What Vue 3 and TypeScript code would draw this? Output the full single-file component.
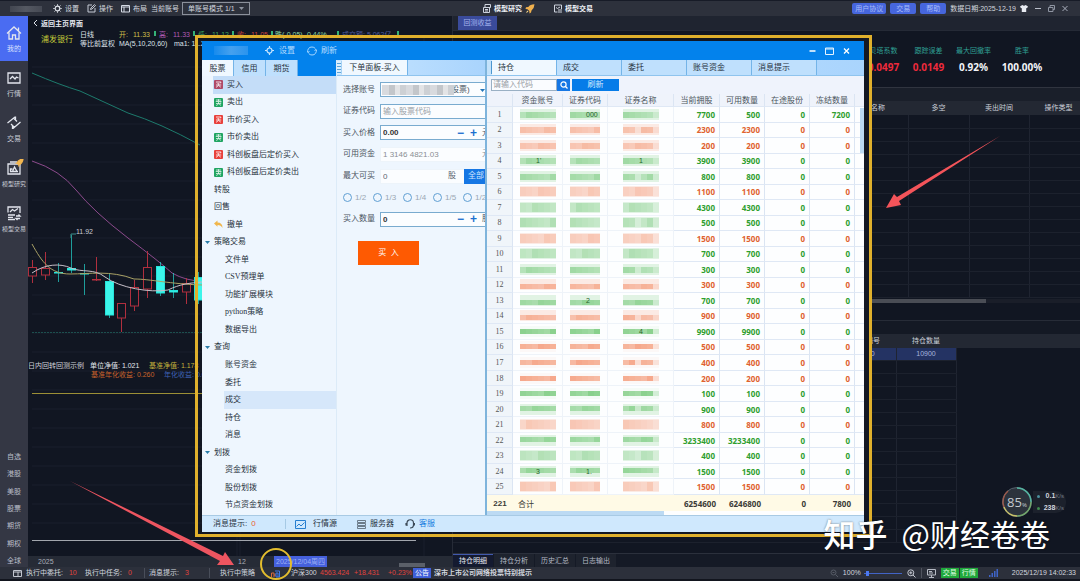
<script setup lang="ts">
interface NavItem { text: string; kind: 'buy' | 'sell' | 'plain' | 'undo' | 'group' | 'child'; active?: boolean; hover?: boolean }
interface Holding { total: number; usable: number; frozen: number; up: boolean; mask: string }
interface Candle { x: number; top: number; bottom: number; high: number; low: number; up: boolean }

const sideItems = ['我的', '行情', '交易', '模型研究', '模型交易']
const sideLinks = ['自选', '港股', '美股', '股票', '期货', '期权', '全球']

const nav: NavItem[] = [
  { text: '买入', kind: 'buy', active: true },
  { text: '卖出', kind: 'sell' },
  { text: '市价买入', kind: 'buy' },
  { text: '市价卖出', kind: 'sell' },
  { text: '科创板盘后定价买入', kind: 'buy' },
  { text: '科创板盘后定价卖出', kind: 'sell' },
  { text: '转股', kind: 'plain' },
  { text: '回售', kind: 'plain' },
  { text: '撤单', kind: 'undo' },
  { text: '策略交易', kind: 'group' },
  { text: '文件单', kind: 'child' },
  { text: 'CSV预埋单', kind: 'child' },
  { text: '功能扩展模块', kind: 'child' },
  { text: 'python策略', kind: 'child' },
  { text: '数据导出', kind: 'child' },
  { text: '查询', kind: 'group' },
  { text: '账号资金', kind: 'child' },
  { text: '委托', kind: 'child' },
  { text: '成交', kind: 'child', hover: true },
  { text: '持仓', kind: 'child' },
  { text: '消息', kind: 'child' },
  { text: '划拨', kind: 'group' },
  { text: '资金划拨', kind: 'child' },
  { text: '股份划拨', kind: 'child' },
  { text: '节点资金划拨', kind: 'child' },
]

const tableTabs = ['持仓', '成交', '委托', '账号资金', '消息提示']
const columns = ['资金账号', '证券代码', '证券名称', '当前拥股', '可用数量', '在途股份', '冻结数量']

const h = (total: number, up: boolean, mask: string, usable = total, frozen = 0): Holding => ({ total, usable, frozen, up, mask })
const holdings: Holding[] = [
  h(7700, false, 'm', 500, 7200), h(2300, true, 'm'), h(200, true, 'm'), h(3900, false, 'm'), h(800, false, 'm'),
  h(1100, true, 'u'), h(4300, false, 'u'), h(500, false, 'u'), h(1500, true, 'u'), h(700, false, 'u'),
  h(300, false, 'm'), h(300, true, 'b'), h(700, false, 'b'), h(900, true, 'b'), h(9900, false, 'n'),
  h(500, true, 'n'), h(400, true, 'n'), h(200, true, 'n'), h(100, false, 'n'), h(900, false, 't'),
  h(800, true, 'u'), h(3233400, false, 't'), h(400, false, 'u'), h(1500, false, 't'), h(1500, true, 'u'),
]

// Mosaic tiles hide account numbers, codes and names
const bands: Record<string, [number, number, number]> = {
  m: [3, 6, 0.5], u: [1, 9, 0.35], b: [5, 5, 0.62], n: [3, 5, 0.75], t: [2, 5, 0.6],
}
function tiles(row: number, col: number) {
  const [y, height, base] = bands[holdings[row].mask]
  const width = [36, 30, 36][col]
  const out: { x: number; y: number; w: number; h: number; o: number }[] = []
  for (let x = 0, k = 0; x < width; x += 6, k++) {
    const n = ((row * 7 + k * 13 + col * 29 + k * k * 5) % 10) / 10
    const edge = col === 2 && (k === 5 || (k === 2 && row % 3 === 1)) ? 0.35 : 1
    out.push({ x, y, w: 6, h: height, o: (base - 0.1 + n * 0.22) * edge })
  }
  return out
}
const remnants: Record<string, string> = { '0-1': '000', '3-0': "1'", '3-2': '1', '12-1': '2', '14-2': '4', '23-0': '3', '23-1': '1.' }

const candles: Candle[] = [
  { x: 32, top: 267, bottom: 276, high: 260, low: 283, up: true },
  { x: 45, top: 268, bottom: 275, high: 252, low: 280, up: true },
  { x: 58, top: 272, bottom: 273, high: 263, low: 282, up: false },
  { x: 71, top: 268, bottom: 270, high: 235, low: 273, up: false },
  { x: 84, top: 273, bottom: 274, high: 264, low: 295, up: false },
  { x: 96, top: 279, bottom: 280, high: 257, low: 281, up: true },
  { x: 109, top: 281, bottom: 315, high: 273, low: 318, up: false },
  { x: 121, top: 303, bottom: 318, high: 303, low: 332, up: true },
  { x: 134, top: 287, bottom: 306, high: 280, low: 311, up: true },
  { x: 147, top: 267, bottom: 289, high: 251, low: 298, up: true },
  { x: 160, top: 266, bottom: 293, high: 262, low: 296, up: false },
  { x: 173, top: 290, bottom: 292, high: 273, low: 298, up: false },
  { x: 186, top: 283, bottom: 292, high: 278, low: 304, up: true },
  { x: 198, top: 277, bottom: 300, high: 272, low: 304, up: false },
]
const fractions = ['1/2', '1/3', '1/4', '1/5', '1/2']
const stats = [
  { name: '贝塔系数', value: '0.0497', red: true },
  { name: '跟踪误差', value: '0.0149', red: true },
  { name: '最大回撤率', value: '0.92%', red: false },
  { name: '胜率', value: '100.00%', red: false },
]
</script>

<template>
  <div class="desk">
    <header class="top">
      <div class="top-left">
        <span class="smudge"></span>
        <button class="tool">
          <svg width="9" height="9" viewBox="0 0 9 9"><circle cx="4.500" cy="4.500" r="2.300" fill="none" stroke="#dfe3ea" stroke-width="1.200" /><path d="M4.500 .3v1.400M4.500 7.300v1.400M.3 4.500h1.400M7.300 4.500h1.400M1.500 1.500l1 1M6.500 6.500l1 1M7.500 1.500l-1 1M2.500 6.500l-1 1" stroke="#dfe3ea" /></svg>设置
        </button>
        <button class="tool">
          <svg width="9" height="9" viewBox="0 0 9 9" fill="none" stroke="#c5cad4"><path d="M5 1H1v7h7V4M3.500 5.500l.4-1.500L7.500.6l1 1L5 5z" /></svg>操作
        </button>
        <button class="tool">
          <svg width="9" height="9" viewBox="0 0 9 9" fill="none" stroke="#d5dae4"><path d="M.5 1.500h8v6.500h-8zM.5 3h8M3 3v5" /></svg>布局
        </button>
        <label class="mode">当前账号
          <span class="mode-box">
            <select><option>单账号模式 1/1</option></select>
            <svg width="5" height="3" viewBox="0 0 5 3"><path d="M0 0h5L2.500 3z" fill="#8d939f" /></svg>
          </span>
        </label>
      </div>
      <div class="top-mid">
        <a href="#"><svg width="8" height="9" viewBox="0 0 8 9" fill="none" stroke="#cfd4de"><path d="M2 .5h5.500v3H2zM.5 3.500h6v5h-6zM2 5.500h3M2 7h3" /></svg>模型研究
          <svg width="10" height="10" viewBox="0 0 10 10"><path d="M9.500.3Q5 .5 3.300 3L1 3.300.5 5l2 .2 1.800 1.900L4.500 9.500 6 8.500l.5-2Q9.300 4.500 9.500.3z" fill="#f0b04e" /><path d="M2.200 6.500 1 9l2.500-1.200z" fill="#f8d78c" /></svg>
        </a>
        <a href="#"><svg width="8" height="9" viewBox="0 0 8 9" fill="none" stroke="#cfd4de"><path d="M.5 1h7v4M.5 1v7h3M2 3.500l1.500 1L6 3M4 6h4M4 8h4" /></svg>模型交易</a>
      </div>
      <div class="top-right">
        <button class="pill">用户协议</button><button class="pill">交易</button><button class="pill">帮助</button>
        <span>数据日期:2025-12-19</span>
        <svg width="8" height="7" viewBox="0 0 8 7"><path d="M2.300 0Q4 1.300 5.700 0L8 1.500 7 3.300l-.8-.4V7H1.800V2.900l-.8.4L0 1.500z" fill="#e8ebf2" /></svg>
        <button class="win-btn" aria-label="最小化"><svg width="6" height="7" viewBox="0 0 6 7"><path d="M0 3.500h6" stroke="#b9bec9" /></svg></button>
        <button class="win-btn" aria-label="还原"><svg width="7" height="7" viewBox="0 0 7 7" fill="none" stroke="#8f95a2"><path d="M.5 2.500h4.500v4H.5zM2 2.500v-2h4.500v4H5" /></svg></button>
        <button class="win-btn" aria-label="关闭"><svg width="6" height="7" viewBox="0 0 6 7"><path d="M.5 1l5 5M5.500 1l-5 5" stroke="#a9aebb" /></svg></button>
      </div>
    </header>

    <div class="body">
      <nav class="side">
        <a v-for="(s, i) in sideItems" :key="s" href="#" class="side-item" :class="{ on: i === 0, small: i > 2 }">
          <svg width="20" height="18" viewBox="0 0 20 18" fill="none" stroke="#e3e6ee" stroke-width="1.300">
            <template v-if="i === 0"><path d="M3 9.500 10 3l7 6.500M5 8.500V15h3.500v-4h3v4H15V8.500M14.500 6.500V3.500" /></template>
            <template v-else-if="i === 1"><path d="M4 4h12v10H4zM6 10l2.500-2.500L11 10l1.500-2 2 1" /></template>
            <template v-else-if="i === 2"><path d="M3.500 9 11 3M11.500 2.500v3.500M9.500 4l3.500 3.500M16.500 8 9 14.500M8.500 15v-3.500M10.500 13.500 7 10" /></template>
            <template v-else-if="i === 3">
              <path d="M4 5h12v10H4zM6 3h7M6.500 12.500V10h2M8.500 12.500l2-4.500 2.500 4.500M6 12.500h8" /><path d="M19 0Q14.500.5 13 4l1.800 1.800Q18.500 4.500 19 0zM13 4l-1.500.5M14.800 5.800V7.500" fill="#f3b64f" stroke="#f3b64f" />
            </template>
            <template v-else><path d="M4 8.500V3h12v6M6 8l2.500-2.500 2 1.500L14 4.500M4 11h7M4 13.300h5M4 15.500h7M12 12h4l-1.500-1.500M16 14.500h-4l1.500 1.500" /></template>
          </svg>
          <span>{{ s }}</span>
        </a>
        <div class="side-links"><a v-for="s in sideLinks" :key="s" href="#">{{ s }}</a></div>
      </nav>

      <section class="chart">
        <svg class="plot" width="424" height="551" viewBox="28 16 424 551">
          <g stroke="#1a1f2c">
            <path v-for="n in 25" :key="n" :d="`M32 ${48 + n * 19}H452`" />
            <path d="M240 400V556M424 38V556M237 537v19" />
          </g>
          <path d="M37 20l-3 3 3 3" fill="none" stroke="#dfe3ea" />
          <text x="41" y="26" class="b" fill="#e4e7ee">返回主页界面</text>
          <text x="41" y="42" class="big" fill="#c6cf3a">浦发银行</text>
          <text x="80" y="37" fill="#dfe3ea">日线</text>
          <text x="80" y="46" fill="#dfe3ea">等比前复权</text>
          <text x="119" y="37" fill="#cdbf4a">开: <tspan x="133">11.33</tspan></text>
          <text x="159" y="37" fill="#b05bb5">高: <tspan x="173">11.33</tspan></text>
          <text x="198" y="37" fill="#3fa55a">低: <tspan x="212">11.12</tspan></text>
          <text x="237" y="37" fill="#c9423c">收: <tspan x="251">11.05</tspan></text>
          <text x="275" y="37" fill="#8fd6a4">跌(-0.05) -0.44%</text>
          <text x="342" y="37" fill="#4d5a9c">成交额: 5.062亿</text>
          <path d="M155 31v5M194 31v5M233 31v5M272 31v5M338 31v5M398 31v5" stroke="#35b277" stroke-width="2" />
          <text x="119" y="46" fill="#dfe3ea">MA(5,10,20,60)</text>
          <text x="174" y="46" fill="#dfe3ea">ma1: 11.2</text>

          <path d="M32 73Q60 85 80 91L128 113Q160 123 200 145" fill="none" stroke="#1d7a6c" />
          <path d="M32 161Q60 170 76 190 94 212 128 238 160 262 172 273 186 281 202 281" fill="none" stroke="#8c4a8c" />
          <g v-for="c in candles" :key="c.x" :stroke="c.up ? '#b02f3e' : '#25e5dc'" :fill="c.up ? '#111622' : '#3cf5ea'">
            <path :d="`M${c.x}.5 ${c.high}V${c.low}`" :opacity="c.up ? 1 : 0.65" />
            <rect :x="c.x - 4 + 0.5" :y="c.top + 0.5" width="8" :height="c.bottom - c.top - 0.5" />
          </g>
          <path d="M32 244C42 262 50 274 70 274S110 270 134 279C150 279 170 284 202 285" fill="none" stroke="#aaa266" />
          <path d="M32 273C45 264 60 263 71 268S94 268 105 277C120 288 150 293 168 290 180 284 190 283 202 282" fill="none" stroke="#c6bfc8" />
          <path d="M71 238v-4h5" fill="none" stroke="#3a8f8c" />
          <text x="76" y="234" fill="#c8ccd4">11.92</text>
          <path d="M32 332.500H202" stroke="#1c4f4e" stroke-dasharray="2 1" />
          <text x="28" y="368" fill="#ccd0d8">日内回转回测示例</text>
          <text x="90" y="368" fill="#e2e5ec">单位净值: 1.021</text>
          <text x="149" y="368" fill="#c3b23c">基准净值: 1.178</text>
          <text x="91" y="377" fill="#c8632c">基准年化收益: 0.260</text>
          <text x="164" y="377" fill="#3f62b5">年化收益: 0.0</text>
          <path d="M32 393.500H202" stroke="#9c8f36" />
          <path d="M32 540.500H416" stroke="#a2a6ad" />
          <rect x="28" y="556" width="424" height="11" fill="#262b36" />
          <text x="38" y="564" fill="#a9aeb8">2025</text>
          <text x="238" y="564" fill="#a9aeb8">12</text>
          <rect x="274" y="556" width="53" height="11" fill="#4560dc" />
          <text x="276" y="564" fill="#9fb1f5">2025/12/04周四</text>
          <rect x="399" y="563" width="26" height="4" fill="#5b6069" />
        </svg>
      </section>

      <section class="panel">
        <div class="panel-tabs"><button>回测收益</button></div>
        <dl class="stats">
          <div v-for="s in stats" :key="s.name"><dt>{{ s.name }}</dt><dd :class="{ red: s.red }">{{ s.value }}</dd></div>
        </dl>
        <div class="strip"></div>
        <table class="trades">
          <colgroup><col /><col class="c60" /><col class="c61" /><col class="c60" /><col class="c51" /></colgroup>
          <thead><tr><th></th><th class="lead">证券名称</th><th>多空</th><th>卖出时间</th><th class="cut">操作类型</th></tr></thead>
          <tbody><tr v-for="n in 14" :key="n"><td v-for="m in 5" :key="m"></td></tr></tbody>
        </table>
        <div class="hscroll"><i></i></div>
        <div class="strip low"></div>
        <table class="positions">
          <colgroup><col /><col class="c60" /><col class="c60" /><col class="c124" /></colgroup>
          <thead><tr><th></th><th>模型编号</th><th>持仓数量</th><th></th></tr></thead>
          <tbody>
            <tr class="sel"><td></td><td>16.00</td><td>10900</td><td></td></tr>
            <tr v-for="n in 14" :key="n"><td v-for="m in 4" :key="m"></td></tr>
          </tbody>
        </table>
        <div class="bottom-tabs">
          <button class="on">持仓明细</button><button>持仓分析</button><button>历史汇总</button><button>日志输出</button>
        </div>
      </section>
    </div>

    <footer class="status">
      <svg width="9" height="8" viewBox="0 0 9 8" fill="none" stroke="#c3c7d0"><path d="M.5 1.500h8v6h-8zM.5 3h8M5 3v4.500" /></svg>
      <span class="s1">执行中委托: <b>10</b></span>
      <span class="s2">执行中任务: <b>0</b></span>
      <span class="s3">消息提示: <b>3</b></span>
      <span class="s4">执行中策略</span>
      <svg class="s-ico" width="9" height="9" viewBox="0 0 9 9" fill="none"><path d="M.5 8V4H3v4M3 6h2" stroke="#d9683a" /><path d="M4 2h4.500v6H5V4h2v4" stroke="#3f78e8" /></svg>
      <span class="s5">沪深300</span>
      <span class="r">4563.424</span><span class="r">+18.431</span><span class="r last">+0.23%</span>
      <span class="note">公告</span><span class="b">深市上市公司网络投票特别提示</span>
      <div class="status-right">
        <svg width="8" height="8" viewBox="0 0 8 8" fill="none" stroke="#565b66"><circle cx="3.500" cy="3.500" r="2.500" /><path d="M5.500 5.500L8 8M2.500 3.500h2" /></svg>
        <span>100%</span>
        <input type="range" min="0" max="100" value="5" aria-label="缩放" />
        <svg width="9" height="9" viewBox="0 0 9 9" fill="none" stroke="#c3c7d0"><circle cx="3.800" cy="3.800" r="3" /><path d="M6 6l2.500 2.500M2.300 3.800h3M3.800 2.300v3" /></svg>
        <i class="bar"></i>
        <svg width="9" height="9" viewBox="0 0 9 9" fill="none" stroke="#b6bac4"><path d="M.5.5h8v5.500h-8zM2 2.500h3M2 4h4M4.500 6v2M2 8.500h5" /></svg>
        <span class="greens"><span class="ok">交易</span><span class="ok">行情</span></span>
        <svg class="sig" width="9" height="8" viewBox="0 0 9 8" fill="#3e64c9"><path d="M0 6h1.500v2H0zM2.500 4H4v4H2.500zM5 2h1.500v6H5zM7.500 0H9v8H7.500z" /></svg>
        <time>2025/12/19 14:02:33</time>
      </div>
    </footer>

    <div class="frame">
      <div class="win">
        <div class="title">
          <span class="smudge light"></span>
          <button class="t-set"><svg width="9" height="9" viewBox="0 0 9 9" fill="none" stroke="#c9e6ff" stroke-width="1.200"><circle cx="4.500" cy="4.500" r="2.500" /><path d="M4.500 0v2M4.500 7v2M0 4.500h2M7 4.500h2" /></svg>设置</button>
          <button><svg width="10" height="10" viewBox="0 0 10 10" fill="none" stroke="#a5d6ff"><path d="M1 6.500A4 4 0 0 1 5 1q2 0 3.300 1.500M9 3.500A4 4 0 0 1 5 9Q3 9 1.700 7.500M0 5l1 1.500 1.500-1M7.500 4.500 9 3.500 10 5" /></svg>刷新</button>
          <div class="t-right">
            <button aria-label="最小化"><svg width="7" height="8" viewBox="0 0 7 8"><path d="M.5 4h6" stroke="#fff" stroke-width="1.500" /></svg></button>
            <button aria-label="最大化"><svg width="9" height="8" viewBox="0 0 9 8"><path d="M.5 1h8v6.500h-8zM.5 2h8" fill="none" stroke="#e4f3ff" /></svg></button>
            <button aria-label="关闭"><svg width="7" height="8" viewBox="0 0 7 8"><path d="M1 1.500l5 5M6 1.500l-5 5" stroke="#fff" stroke-width="1.300" /></svg></button>
          </div>
        </div>

        <div class="cols">
          <aside class="menu">
            <div class="tabs first"><button class="on">股票</button><button>信用</button><button>期货</button></div>
            <ul>
              <li v-for="n in nav" :key="n.text" :class="[n.kind, { active: n.active, hover: n.hover }]">
                <a href="#">
                  <svg v-if="n.kind === 'buy' || n.kind === 'sell'" width="9" height="9" viewBox="0 0 9 9">
                    <rect width="9" height="9" rx="1" :fill="n.kind === 'sell' ? '#20a562' : n.active ? '#b04a68' : '#e8413c'" />
                    <path v-if="n.kind === 'buy'" d="M2 2h5l-.6 1.300M2.800 3.200l.8.5M2 5h5.200M4.700 3v2Q4 6.500 2 7.300M5 5.800l1.800 1.400" fill="none" stroke="#fff" stroke-width=".8" />
                    <path v-else d="M2 2h5M4.500 1.200v2M1.800 3.500h5.400l-.5 1.100M2 5.500h5.200M4.500 4v1.500Q4 7 2.200 7.500M5.200 6.200l1.800 1.200" fill="none" stroke="#fff" stroke-width=".7" />
                  </svg>
                  <svg v-else-if="n.kind === 'undo'" width="9" height="9" viewBox="0 0 9 9"><path d="M0 3.500 3.500.5v2Q8.500 2.500 8.500 8 7 5 3.500 5v1.800z" fill="#f0b64c" /></svg>
                  <svg v-else-if="n.kind === 'group'" width="5" height="3" viewBox="0 0 5 3"><path d="M0 0h5L2.500 3z" fill="#2b7da8" /></svg>
                  {{ n.text }}
                </a>
              </li>
            </ul>
          </aside>

          <section class="form">
            <div class="tabs"><i class="grip"></i><button class="on wide">下单面板-买入</button></div>
            <form @submit.prevent>
              <div class="row">
                <label for="acc">选择账号</label>
                <div class="box">
                  <select id="acc"><option>普通股票)</option></select><span class="mask"></span>
                  <svg class="caret" width="5" height="3" viewBox="0 0 5 3"><path d="M0 0h5L2.500 3z" fill="#2374b8" /></svg>
                </div>
              </div>
              <div class="row"><label for="code">证券代码</label><div class="box"><input id="code" placeholder="输入股票代码" /></div></div>
              <div class="row">
                <label for="price">买入价格</label>
                <div class="box"><input id="price" value="0.00" class="strong" /><button type="button">−</button><button type="button">+</button><span>元</span></div>
              </div>
              <div class="row"><label for="cash">可用资金</label><div class="box pale"><input id="cash" value="1 3146 4821.03" readonly /><span>元</span></div></div>
              <div class="row">
                <label for="max">最大可买</label>
                <div class="box pale max"><input id="max" value="0" readonly /><span>股</span><button type="button" class="all">全部</button></div>
              </div>
              <div class="radios"><label v-for="(f, i) in fractions" :key="i"><input type="radio" name="part" />{{ f }}</label></div>
              <div class="row">
                <label for="qty">买入数量</label>
                <div class="box"><input id="qty" value="0" class="strong" /><button type="button">−</button><button type="button">+</button><span>股</span></div>
              </div>
            </form>
            <button class="buy-btn">买&nbsp; 入</button>
          </section>

          <section class="list">
            <div class="tabs grid"><i class="grip"></i><button v-for="(t, i) in tableTabs" :key="t" :class="{ on: i === 0 }">{{ t }}</button></div>
            <div class="search">
              <input placeholder="请输入代码" aria-label="代码" />
              <button class="find" aria-label="搜索"><svg width="8" height="8" viewBox="0 0 8 8" fill="none" stroke="#fff" stroke-width="1.200"><circle cx="3.500" cy="3.500" r="2.600" /><path d="M5.500 5.500 7.500 7.500" /></svg></button>
              <button class="refresh">刷新</button>
            </div>
            <div class="table-wrap">
              <table class="hold">
                <colgroup><col class="n" /><col class="a" /><col class="c" /><col class="m" /><col class="q" /><col class="c" /><col class="c" /><col class="c" /><col /></colgroup>
                <thead><tr><th></th><th v-for="c in columns" :key="c">{{ c }}</th><th></th></tr></thead>
                <tbody>
                  <tr v-for="(r, i) in holdings" :key="i" :class="r.up ? 'up' : 'down'">
                    <th scope="row">{{ i + 1 }}</th>
                    <td v-for="k in 3" :key="k" class="hid">
                      <svg :width="k === 2 ? 30 : 36" height="11" :viewBox="`0 0 ${k === 2 ? 30 : 36} 11`" shape-rendering="crispEdges">
                        <rect width="100%" height="11" :opacity="r.mask === 'n' ? 0.06 : 0.2" />
                        <rect v-for="t in tiles(i, k - 1)" :key="t.x" :x="t.x" :y="t.y" :width="t.w" :height="t.h" :opacity="t.o" />
                        <text v-if="remnants[`${i}-${k - 1}`]" x="16" y="8">{{ remnants[`${i}-${k - 1}`] }}</text>
                      </svg>
                    </td>
                    <td>{{ r.total }}</td><td>{{ r.usable }}</td><td>0</td><td>{{ r.frozen }}</td><td></td>
                  </tr>
                </tbody>
                <tfoot><tr><th scope="row">221</th><td class="sum" colspan="3">合计</td><td>6254600</td><td>6246800</td><td>0</td><td>7800</td><td></td></tr></tfoot>
              </table>
              <i class="vbar"></i>
            </div>
            <div class="hbar"></div>
          </section>
        </div>

        <div class="win-status">
          <span class="w1">消息提示: <b>0</b></span>
          <span class="w2"><svg width="11" height="9" viewBox="0 0 11 9" fill="none" stroke="#277fd0"><path d="M.5.5h10v8H.5zM1.500 6.500l2.500-2.500 2 2 3.500-3.500" /></svg>行情源</span>
          <span class="w3"><svg width="9" height="9" viewBox="0 0 9 9" fill="none" stroke="#53606c"><path d="M.5 .5h8v2h-8zM.5 3.500h8v2h-8zM.5 6.500h8v2h-8z" stroke-width=".8" /></svg>服务器</span>
          <a href="#"><svg width="10" height="10" viewBox="0 0 10 10" fill="none" stroke="#3c4a58" stroke-width="1.200"><path d="M2 7V4a3 3 0 0 1 6.500 0v2Q8.500 9 5 9M1 4v2.500M9.500 4v2.500" /></svg>客服</a>
        </div>
      </div>
    </div>

    <svg class="arrow-left" width="170" height="90" viewBox="68 479 170 90"><path d="M70 481 223 556 225 552 234 565 217 565 220 561z" fill="#ee5560" /></svg>
    <svg class="arrow-right" width="118" height="76" viewBox="884 134 118 76"><path d="M1000 136 897 197 894 194 886 208 901 205 899 201z" fill="#f4545a" /></svg>
    <svg class="ring" width="34" height="34" viewBox="0 0 34 34"><circle cx="17" cy="17" r="15" fill="none" stroke="#e3bd2e" stroke-width="2" /></svg>

    <div class="speed">
      <svg width="32" height="32" viewBox="0 0 32 32" fill="none">
        <circle cx="16" cy="16" r="14.500" fill="#2c333d" stroke="#56616b" stroke-width="1" />
        <path d="M16 2A14 14 0 0 1 30 16" stroke="#55b5a2" stroke-width="1.500" /><path d="M30 16A14 14 0 0 1 16 30" stroke="#72a66c" stroke-width="1.500" />
        <path d="M16 30A14 14 0 0 1 3 21" stroke="#c9c26a" stroke-width="1.500" /><path d="M3 21A14 14 0 0 1 7 5" stroke="#9d5a4c" stroke-width="1.500" />
        <text x="6" y="21">85<tspan class="pc">%</tspan></text>
      </svg>
      <div class="rates"><span><i></i>0.1<small>K/s</small></span><span><i class="g"></i>238<small>K/s</small></span></div>
    </div>
    <div class="credit"><b>知乎</b><span>@财经卷卷</span></div>
  </div>
</template>

<style>
html, body { margin: 0; background: #111622; }
</style>

<style scoped>
* { box-sizing: border-box; }
.desk { position: relative; display: flex; flex-direction: column; min-height: 100vh; overflow: hidden; background: #111622; color: #d3d7df; font: 7px/10px "Liberation Sans", "Noto Sans CJK SC", sans-serif; white-space: nowrap; }
button, input, select { margin: 0; padding: 0; border: 0; background: none; color: inherit; font: inherit; border-radius: 0; outline: 0; min-width: 0; appearance: none; }
a { color: inherit; text-decoration: none; }
svg { flex: none; display: block; }
.b { font-weight: bold; }

.top { display: grid; grid-template-columns: 1fr auto 1fr; align-items: center; height: 16px; background: #2d313c; border-top: 1px solid #171b27; }
.top-left, .top-mid, .top-right, .tool, .mode, .top-mid a { display: flex; align-items: center; }
.top-left { gap: 11px; padding-left: 10px; }
.tool { gap: 3px; width: 23px; }
.smudge { width: 32px; height: 6px; background: linear-gradient(90deg, #4b4f59, #666a73, #50545e); opacity: 0.7; }
.mode { gap: 3px; margin-left: -4px; }
.mode-box { display: flex; align-items: center; width: 68px; height: 13px; border: 1px solid #8b909b; padding: 0 5px; }
.mode-box select { flex: 1; height: 11px; line-height: 11px; }
.top-mid { gap: 19px; font-weight: bold; color: #edf0f6; padding-right: 4px; }
.top-mid a { gap: 3px; }
.top-right { justify-content: flex-end; gap: 4px; padding-right: 12px; }
.pill { background: #4666dd; color: #a9bdf9; height: 11px; line-height: 11px; padding: 0 6px; border-radius: 2px; }
.pill:first-child { padding: 0 3px; }
.win-btn { margin-left: 3px; }

.body { flex: 1; display: flex; min-height: 0; }
.side { width: 28px; display: flex; flex-direction: column; background: #343744; }
.side-item { display: flex; flex-direction: column; align-items: center; height: 45px; padding-top: 8px; gap: 2px; color: #c8ccd6; }
.side-item span { line-height: 10px; }
.side-item.small { font-size: 6px; }
.side-item.on { background: #4a6cf2; color: #dbe3ff; }
.side-links { margin-top: auto; height: 116px; display: flex; flex-direction: column; justify-content: space-between; align-items: center; color: #b9bdc8; }
.side-links a { line-height: 12px; }

.chart { width: 424px; overflow: hidden; }
.plot text { font: 7px "Liberation Sans", "Noto Sans CJK SC", sans-serif; }
.plot text.b { font-weight: bold; }
.plot text.big { font-size: 8px; }

.panel { flex: 1; min-width: 0; display: flex; flex-direction: column; overflow: hidden; border-left: 1px solid #262b37; }
.panel-tabs { height: 15px; padding-left: 5px; background: #1f2430; border-bottom: 1px solid #252a36; }
.panel-tabs button { display: block; width: 39px; height: 14px; background: #3a4b9b; color: #a4b4ee; text-align: center; }
.stats { display: flex; justify-content: flex-end; margin: 0; padding: 15px 32px 0 0; height: 56px; text-align: center; }
.stats div { width: 45px; }
.stats div:last-child { width: 52px; }
.stats dt { color: #2f9f93; line-height: 10px; }
.stats dd { margin: 4px 0 0; font: bold 10px/14px "Noto Sans", sans-serif; color: #f2f4f8; }
.stats dd.red { color: #ee2a3c; }
.strip { height: 14px; background: #1a1f2a; border-top: 1px solid #30343f; }
.panel table { width: 100%; border-collapse: collapse; table-layout: fixed; }
.panel table col.c60 { width: 60px; }
.panel table col.c61 { width: 61px; }
.panel table col.c51 { width: 51px; }
.panel table col.c124 { width: 124px; }
.panel th { height: 14px; padding: 0; font-weight: normal; background: #232833; color: #ccd0d9; }
.panel th.lead { text-align: right; padding-right: 23px; }
.panel th.cut { padding-left: 8px; }
.panel td { height: 13px; padding: 0; text-align: center; border-right: 1px solid #1f2431; border-bottom: 1px solid #1c212d; color: #a6b3df; }
.hscroll { margin: 1px 0 17px; height: 4px; background: #1a1e29; padding-right: 94px; }
.hscroll i { display: block; height: 4px; background: #4a4d55; }
.strip.low { height: 14px; background: #141924; border-top: 1px solid #272c37; }
.positions { flex: none; }
.positions td:last-child, .trades td:last-child { border-right: 0; }
.positions td:last-child { border-bottom: 0; }
.sel td { background: #243363; }
.sel td:last-child { background: none; }
.bottom-tabs { display: flex; gap: 1px; margin-top: auto; height: 14px; position: relative; background: #151a26; border-top: 1px solid #2b303c; }
.bottom-tabs button { width: 40px; background: #1e232e; color: #b5bac5; }
.bottom-tabs .on { background: #141a30; border-top: 1px solid #4159ae; color: #e6e9f0; }

.status { display: flex; align-items: center; height: 14px; padding-left: 13px; background: #2c303b; border-bottom: 2px solid #12151e; }
.status b, .status .r { font-weight: normal; color: #e0433c; }
.status b { padding-left: 4px; }
.s1 { margin-left: 4px; width: 59px; }
.s2 { width: 60px; border-right: 1px solid #494e5a; }
.s3 { padding-left: 4px; width: 65px; border-right: 1px solid #494e5a; }
.s4 { padding-left: 10px; width: 61px; }
.s5 { margin-left: 11px; width: 29px; }
.r { width: 34px; }
.r.last { width: 25px; }
.note { background: #3f5fd8; color: #fff; padding: 0 2px; margin-right: 3px; }
.status-right { margin-left: auto; display: flex; align-items: center; gap: 5px; padding-right: 4px; }
.status-right > svg:first-child { margin-right: 3px; }
.status-right > span:not(.greens) { margin: 0 -2px 0 -3px; }
.status-right input { width: 38px; height: 5px; background: linear-gradient(#0000 2px, #4264c6 2px, #4264c6 3px, #0000 3px); }
.status-right input::-webkit-slider-thumb { appearance: none; width: 3px; height: 5px; background: #4b78f0; }
.bar { width: 1px; height: 10px; background: #50545f; }
.greens { display: flex; gap: 1px; }
.ok { background: #1fa83b; color: #e0ffe4; padding: 0 2px; }
.sig { margin: 0 9px 0 6px; }

.frame { position: absolute; inset: 35px 208px 44px 195px; border: 3px solid #e0b02c; padding: 3px 5px 2px 4px; display: flex; background: linear-gradient(#141823, #141823) right / 6px 100% no-repeat; }
.win { flex: 1; min-width: 0; display: flex; flex-direction: column; background: #eef6fe; color: #27323d; font-size: 8px; }
.title { display: flex; align-items: center; height: 19px; background: #0382ec; color: #b5dcff; padding: 0 14px 0 12px; }
.title button { display: flex; align-items: center; gap: 4px; }
.smudge.light { width: 34px; height: 9px; background: linear-gradient(90deg, #1f8fee, #62aef0, #3c9cef); }
.title .t-set { margin: 0 12px 0 17px; gap: 5px; }
.t-right { margin-left: auto; display: flex; gap: 9px; }
.cols { flex: 1; display: flex; min-height: 0; }
.tabs { display: flex; height: 16px; background: linear-gradient(90deg, #c9e6ff, #a9d4fd); border-bottom: 1px solid #8fc4ee; }
.tabs button { background: #bfe0fd; border-right: 1px solid #74b4e8; width: 32px; line-height: 15px; }
.tabs button.on { background: #f0f8ff; }
.tabs.first { background: #0382ec; border-bottom: 0; }
.tabs .wide { width: 66px; }
.grip { width: 5px; margin: 1px 0; background: repeating-linear-gradient(#d9efff 0 2px, #5ca3d8 2px 3px); border-right: 1px solid #a7d2f4; }
.tabs.grid .grip { border-color: #4c96cf; background: #c4e2fa; }
.tabs.grid button { width: 65px; text-align: left; padding-left: 6px; }

.menu { width: 135px; display: flex; flex-direction: column; border-right: 1px solid #dcebf8; }
.menu ul { flex: 1; display: flex; flex-direction: column; margin: 0; padding: 0 0 1px; list-style: none; }
.menu li { flex: 1; display: flex; padding-left: 11px; }
.menu a { flex: 1; display: flex; align-items: center; gap: 4px; padding-left: 1px; font-family: "Liberation Serif", "Noto Sans CJK SC", serif; }
.menu li.active a { background: #c4ddf8; }
.menu li.group { padding-left: 2px; }
.menu li.child { padding-left: 22px; }
.menu li.hover a { background: #d6e7fa; }

.form { width: 150px; overflow: hidden; border-right: 2px solid #7eb4dc; }
.form form { display: grid; grid-template-rows: repeat(7, 1fr); height: 151px; width: 156px; padding-left: 6px; color: #4b555f; align-items: center; margin-top: 3px; }
.row { display: grid; grid-template-columns: 37px minmax(0, 1fr); align-items: center; }
.box { position: relative; display: flex; align-items: center; height: 15px; background: #fbfdff; border: 1px solid #79abcf; padding-left: 2px; }
.box input, .box select { flex: 1; width: 0; height: 13px; }
.box input::placeholder, .search input::placeholder { color: #9aa0a6; opacity: 1; }
.box .strong { font-weight: bold; color: #333; }
.box button { width: 13px; color: #1b70cf; font: bold 12px/12px "Liberation Sans", sans-serif; }
.box span:not(.mask) { width: 12px; text-align: center; }
.box.pale { border-color: #edf4fa; color: #8a8f94; }
.box.max { color: #5c6670; }
.box.max .all { width: 28px; height: 15px; margin-left: 6px; background: #1677e4; color: #cfe6ff; font: inherit; text-align: left; padding-left: 4px; }
.box select { padding-left: 52px; }
.mask { position: absolute; left: 1px; top: 2px; width: 72px; height: 10px; background: repeating-linear-gradient(90deg, #d8dade 0 7px, #c3c6ca 7px 13px, #e3e4e6 13px 18px, #cdd0d4 18px 24px); }
.caret { position: absolute; right: 7px; top: 6px; }
.radios { display: flex; }
.radios label { display: flex; align-items: center; gap: 3px; width: 30px; flex: none; color: #9aa7b3; }
.radios input { width: 9px; height: 9px; border: 1px solid #5f9fd3; border-radius: 50%; }
.buy-btn { display: block; width: 61px; height: 24px; margin: 11px 0 0 21px; background: #fe5a02; color: #fff; }

.list { flex: 1; min-width: 0; display: flex; flex-direction: column; }
.search { display: flex; height: 18px; padding: 3px 0 3px 4px; background: #eff3fc; }
.search input { width: 66px; border: 1px solid #9ab0c4; background: #fafcff; padding-left: 1px; }
.find { width: 13px; background: #1677e4; display: flex; align-items: center; justify-content: center; }
.refresh { width: 47px; margin-left: 2px; background: #067ce8; color: #d5eaff; }
.table-wrap { position: relative; flex: 1; display: flex; background: #fdfeff; }
.hold { flex: 1; border-collapse: separate; border-spacing: 0; table-layout: fixed; width: 100%; height: 100%; }
.n { width: 26px; } .a { width: 50px; } .c { width: 45px; } .m { width: 66px; } .q { width: 46px; }
.hold th, .hold td { padding: 0; line-height: 11px; border-right: 1px solid #dbe5f3; border-bottom: 1px solid #dfe8f5; }
.hold thead th { height: 13px; background: #eff3fb; font-weight: normal; color: #4a535c; }
.hold tbody th { background: #f0f5fa; font-weight: normal; color: #555; font-family: "Liberation Serif", serif; }
.hold tbody td, .hold tfoot td { font: bold 8px/11px "Noto Sans", "Noto Sans CJK SC", sans-serif; text-align: right; padding-right: 4px; }
.hold tr > :last-child { border-right: 0; }
.hold tbody .hid { padding: 0; border-right-color: #eef3f9; border-bottom-color: #eef3f9; }
.hid svg { margin: 0 auto; }
.hid text { font: 7px "Liberation Sans", sans-serif; fill: #27642a; }
.down { color: #2f9f2f; } .up { color: #e0622f; }
.down .hid svg { fill: #74c878; } .up .hid svg { fill: #f49a78; }
.hold tfoot th, .hold tfoot td { height: 16px; background: #fffae6; border: 0; color: #3b3b36; }
.hold tfoot .sum { text-align: left; padding-left: 5px; font-weight: normal; }
.vbar { position: absolute; right: 0; top: 14px; width: 4px; height: 45px; background: #bbd9f2; }
.hbar { height: 4px; background: linear-gradient(90deg, #bcdaf3 47%, #fdfeff 47%); }
.win-status { display: flex; align-items: center; height: 17px; padding-left: 11px; background: #cfe8fd; border-top: 1px solid #a8cae4; }
.win-status b { color: #e8632f; font-weight: normal; padding-left: 2px; }
.win-status span, .win-status a { display: flex; align-items: center; gap: 5px; }
.win-status .w1 { width: 73px; border-right: 1px solid #a6c9e4; gap: 2px; }
.win-status .w2 { width: 62px; margin-left: 9px; gap: 7px; }
.win-status .w3 { width: 48px; gap: 4px; }
.win-status a { color: #1a7ee0; gap: 4px; }

.arrow-left { position: absolute; left: 68px; bottom: 12px; }
.arrow-right { position: absolute; right: 78px; top: 134px; }
.ring { position: absolute; left: 259px; bottom: 0; }
.speed { position: absolute; right: 14px; bottom: 63px; display: flex; align-items: center; }
.speed text { font: 13px "Open Sans", sans-serif; fill: #c3cad0; }
.speed .pc { font-size: 6px; }
.rates { display: flex; flex-direction: column; gap: 2px; width: 33px; padding: 0 2px 0 4px; background: #1c212c; border-radius: 0 10px 10px 0; font-weight: bold; }
.rates span { display: flex; align-items: center; justify-content: flex-end; }
.rates i { width: 3px; height: 3px; border-radius: 50%; background: #4a8d9c; margin-right: auto; }
.rates i.g { background: #3f8b4e; }
.rates small { font: 6px/10px "Liberation Sans", sans-serif; color: #737985; }
.credit { position: absolute; right: 30px; bottom: 26px; display: flex; align-items: center; gap: 14px; font: 30px/44px "Noto Sans CJK SC", sans-serif; color: #fff; text-shadow: 0 0 2px #0008; }
.credit b { font-size: 32px; font-weight: 500; }
</style>
